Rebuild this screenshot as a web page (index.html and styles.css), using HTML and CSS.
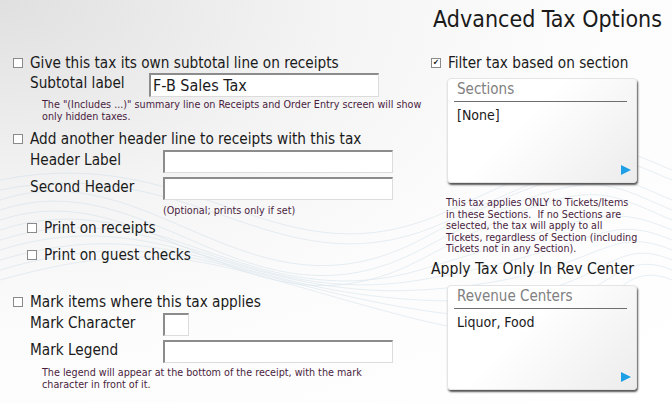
FILE: index.html
```html
<!DOCTYPE html>
<html lang="en">
<head>
    <meta charset="UTF-8">
    <title>Advanced Tax Options</title>
    <link rel="stylesheet" href="styles.css">
</head>
<body>
    <div class="page">
        <svg class="waves" width="672" height="403" viewBox="0 0 672 403">
            <g fill="none" stroke="#c9dbe6" stroke-width="0.7" opacity="0.6">
                <path d="M0 200 C150 150 250 330 420 240 S600 170 672 200"/>
                <path d="M0 210 C150 160 250 340 420 250 S600 180 672 210"/>
                <path d="M0 220 C150 170 250 350 420 260 S600 190 672 220"/>
                <path d="M0 230 C150 180 250 320 420 270 S600 200 672 230"/>
                <path d="M0 240 C160 190 240 310 420 280 S600 210 672 240"/>
                <path d="M0 250 C160 200 240 300 420 290 S600 220 672 250"/>
                <path d="M0 260 C170 210 230 290 420 300 S600 230 672 260"/>
                <path d="M0 270 C170 220 230 280 420 310 S600 240 672 270"/>
                <path d="M0 280 C180 230 220 270 420 320 S600 250 672 280"/>
                <path d="M0 190 C200 150 280 300 450 220 S620 160 672 180"/>
                <path d="M0 180 C200 140 280 290 450 210 S620 150 672 170"/>
            </g>
        </svg>

        <h1 class="title">Advanced Tax Options</h1>

        <div class="columns">
            <div class="left">
                <div class="check-row"><span class="box"></span>Give this tax its own subtotal line on receipts</div>
                <div class="field sub">
                    <span class="label">Subtotal label</span>
                    <span class="input wide">F-B Sales Tax</span>
                </div>
                <p class="note first-note">The "(Includes ...)" summary line on Receipts and Order Entry screen will show<br>only hidden taxes.</p>

                <div class="check-row row2"><span class="box"></span>Add another header line to receipts with this tax</div>
                <div class="field header1">
                    <span class="label">Header Label</span>
                    <span class="input"></span>
                </div>
                <div class="field">
                    <span class="label">Second Header</span>
                    <span class="input"></span>
                </div>
                <p class="note optional">(Optional; prints only if set)</p>
                <div class="check-row indent"><span class="box"></span>Print on receipts</div>
                <div class="check-row indent print2"><span class="box"></span>Print on guest checks</div>

                <div class="check-row row3"><span class="box"></span>Mark items where this tax applies</div>
                <div class="field mark1">
                    <span class="label">Mark Character</span>
                    <span class="input tiny"></span>
                </div>
                <div class="field">
                    <span class="label">Mark Legend</span>
                    <span class="input"></span>
                </div>
                <p class="note last-note">The legend will appear at the bottom of the receipt, with the mark<br>character in front of it.</p>
            </div>

            <div class="right">
                <div class="check-row"><span class="box checked">&#10004;</span>Filter tax based on section</div>
                <div class="panel sections">
                    <div class="panel-head">Sections</div>
                    <div class="panel-body">[None]</div>
                    <span class="arrow"></span>
                </div>
                <p class="note side-note">This tax applies ONLY to Tickets/Items<br>in these Sections.&nbsp; If no Sections are<br>selected, the tax will apply to all<br>Tickets, regardless of Section (including<br>Tickets not in any Section).</p>
                <div class="apply">Apply Tax Only In Rev Center</div>
                <div class="panel centers">
                    <div class="panel-head">Revenue Centers</div>
                    <div class="panel-body">Liquor, Food</div>
                    <span class="arrow"></span>
                </div>
            </div>
        </div>
    </div>
</body>
</html>
```

FILE: styles.css
```css
body {
    margin: 0;
    font-family: "DejaVu Sans Condensed", "DejaVu Sans", sans-serif;
    color: #1a1a1a;
}
.page {
    position: relative;
    width: 672px;
    height: 403px;
    overflow: hidden;
    background: radial-gradient(ellipse at 0 0, #e0e0e0 0, #f4f4f4 35%, #fcfcfc 60%, #fff 100%);
}
.waves {
    position: absolute;
    left: 0;
    top: 0;
}
.title {
    position: relative;
    margin: 0;
    padding: 5px 10px 0 0;
    height: 28px;
    text-align: right;
    font-size: 23px;
    font-weight: normal;
    line-height: 28px;
}
.columns {
    position: relative;
    display: flex;
    padding-top: 20px;
}
.left {
    width: 418px;
    padding-left: 13px;
}
.right {
    width: 220px;
}
.check-row {
    display: flex;
    align-items: center;
    height: 20px;
    font-size: 15.2px;
}
.box {
    width: 8px;
    height: 8px;
    border: 1px solid #8a8a8a;
    background: #fff;
    margin-right: 7px;
    font-size: 8px;
    line-height: 8px;
    text-align: center;
    color: #222;
}
.indent {
    padding-left: 14px;
}
.field {
    display: flex;
    align-items: center;
    height: 23px;
    margin-top: 4px;
    padding-left: 17px;
    font-size: 15.2px;
}
.label {
    width: 133px;
    padding-bottom: 4px;
}
.sub {
    height: 24px;
    margin-top: 0;
}
.sub .label {
    width: 119px;
}
.header1 {
    margin-top: 1px;
}
.mark1 {
    margin-top: 1px;
}
.input {
    box-sizing: border-box;
    width: 230px;
    height: 100%;
    background: #fff;
    border: 1px solid #dcdcdc;
    border-top: 2px solid #8c8c8c;
    border-left: 2px solid #8c8c8c;
    padding: 1px 2px;
    font-size: 16px;
    line-height: 19px;
}
.tiny {
    width: 26px;
}
.note {
    margin: 0;
    font-size: 10.7px;
    line-height: 12px;
    color: #4a1d40;
}
.first-note {
    padding: 2px 0 6px 29px;
}
.last-note {
    padding: 4px 0 0 29px;
}
.optional {
    padding: 5px 0 1px 150px;
}
.print2 {
    margin-top: 7px;
}
.row3 {
    margin-top: 27px;
}
.panel {
    position: relative;
    box-sizing: border-box;
    width: 190px;
    height: 105px;
    margin-left: 16px;
    padding: 1px 9px 0 6px;
    background: linear-gradient(135deg, #ffffff 40%, #ececec 100%);
    border: 1px solid #e4e4e4;
    border-radius: 4px;
    box-shadow: 1px 2px 2px #555;
}
.sections {
    margin-top: 5px;
}
.centers {
    margin-top: 7px;
}
.panel-head {
    color: #808080;
    font-size: 15px;
    line-height: 19px;
    padding: 0 3px 2px;
    border-bottom: 1px solid #6e6e6e;
}
.panel-body {
    padding: 5px 0 0 3px;
    font-size: 14px;
}
.arrow {
    position: absolute;
    right: 5px;
    bottom: 7px;
    width: 0;
    height: 0;
    border-top: 5px solid transparent;
    border-bottom: 5px solid transparent;
    border-left: 10px solid #1ea0e6;
}
.side-note {
    padding: 14px 0 0 15px;
    line-height: 11.6px;
}
.apply {
    font-size: 15.6px;
    padding-top: 5px;
}
```
